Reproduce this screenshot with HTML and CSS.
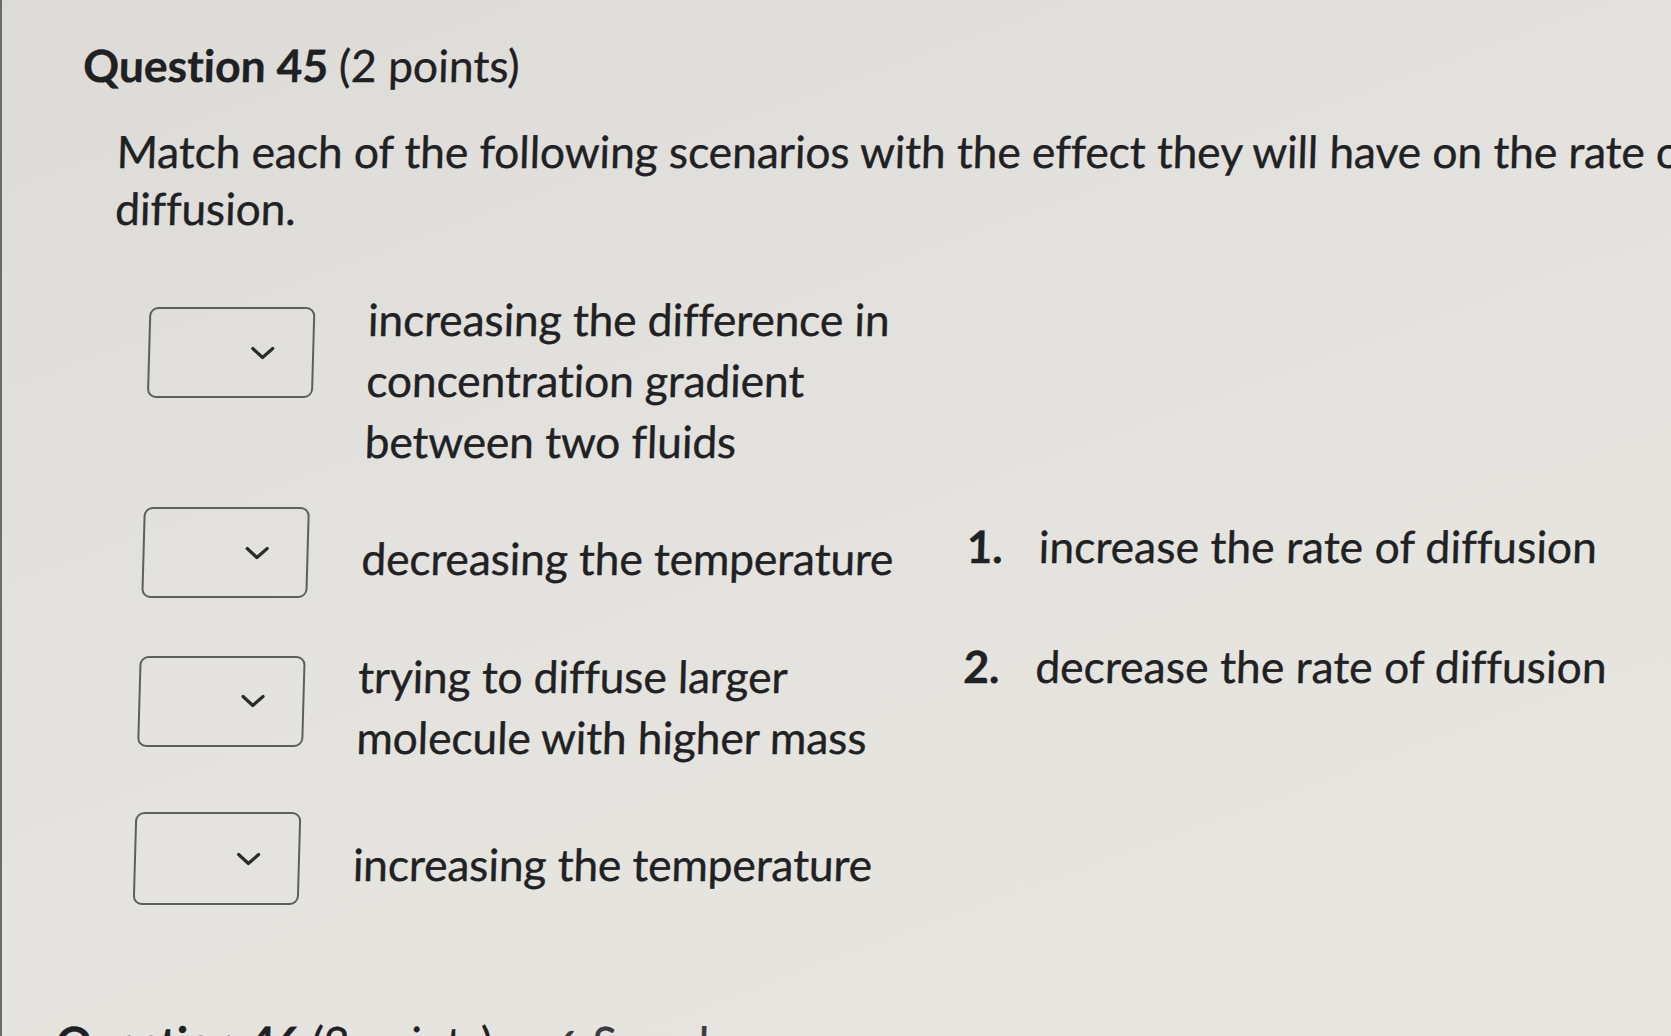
FILE: index.html
```html
<!DOCTYPE html>
<html>
  <head>
    <meta charset="UTF-8" />
    <title>Question 45</title>
    <link rel="stylesheet" href="styles.css">
  </head>
  <body>
    <div class="page">
      <section class="question">
        <h2 class="qtitle">Question 45 <span class="points">(2 points)</span></h2>

        <p class="prompt">Match each of the following scenarios with the effect they will have on the rate of diffusion.</p>

        <div class="match">
          <div class="pairs">
            <div class="pair top">
              <div class="select"><span class="chev"><svg width="25" height="14" viewBox="0 0 25 14"><path d="M2.5 2.5 L12.5 11.5 L22.5 2.5" fill="none" stroke="#2b2b2b" stroke-width="3.2" stroke-linecap="round" stroke-linejoin="round"/></svg></span></div>
              <div class="label">increasing the difference in concentration gradient between two fluids</div>
            </div>
            <div class="pair">
              <div class="select"><span class="chev"><svg width="25" height="14" viewBox="0 0 25 14"><path d="M2.5 2.5 L12.5 11.5 L22.5 2.5" fill="none" stroke="#2b2b2b" stroke-width="3.2" stroke-linecap="round" stroke-linejoin="round"/></svg></span></div>
              <div class="label">decreasing the temperature</div>
            </div>
            <div class="pair">
              <div class="select"><span class="chev"><svg width="25" height="14" viewBox="0 0 25 14"><path d="M2.5 2.5 L12.5 11.5 L22.5 2.5" fill="none" stroke="#2b2b2b" stroke-width="3.2" stroke-linecap="round" stroke-linejoin="round"/></svg></span></div>
              <div class="label">trying to diffuse larger molecule with higher mass</div>
            </div>
            <div class="pair last">
              <div class="select"><span class="chev"><svg width="25" height="14" viewBox="0 0 25 14"><path d="M2.5 2.5 L12.5 11.5 L22.5 2.5" fill="none" stroke="#2b2b2b" stroke-width="3.2" stroke-linecap="round" stroke-linejoin="round"/></svg></span></div>
              <div class="label">increasing the temperature</div>
            </div>
          </div>

          <ol class="choices">
            <li><span class="num">1.</span>increase the rate of diffusion</li>
            <li><span class="num">2.</span>decrease the rate of diffusion</li>
          </ol>
        </div>
      </section>

      <section class="question next">
        <h2 class="qtitle">Question 46 <span class="points">(2 points)</span> <span class="saved">&#10003; Saved</span></h2>
      </section>
    </div>
  </body>
</html>
```

FILE: styles.css
```css
html, body {
  margin: 0;
  padding: 0;
  height: 100%;
  overflow: hidden;
}

body {
  background: linear-gradient(160deg, #dcdbd8 0%, #e3e2de 45%, #e8e6df 100%);
  border-left: 2px solid #6a6a68;
  font-family: Lato, "Open Sans", sans-serif;
  font-variant-ligatures: none;
  color: #1f2123;
  -webkit-text-stroke: 0.35px #1f2123;
}

.page {
  width: 1760px;
  padding: 41px 0 0 83px;
  transform: skewX(-1.6deg);
  transform-origin: 0 0;
}

.qtitle {
  margin: 0;
  font-size: 44.5px;
  line-height: 48px;
  font-weight: 700;
  color: #1e2022;
}

.points {
  font-weight: 400;
}

.prompt {
  margin: 33px 0 0 36px;
  width: 1650px;
  font-size: 44.5px;
  line-height: 57px;
  letter-spacing: -0.15px;
}

.match {
  display: flex;
  margin-top: 52px;
}

.pairs {
  width: 897px;
  padding-left: 73px;
  box-sizing: border-box;
  display: flex;
  flex-direction: column;
  gap: 42px;
}

.pair {
  display: flex;
  align-items: center;
}

.pair.top {
  align-items: flex-start;
  margin-bottom: -6px;
}

.pair.top .select {
  margin-top: 19px;
}

.pair.last {
  margin-top: 8px;
}

.pair.last .select {
  height: 93px;
}

.select {
  flex: none;
  width: 166px;
  height: 91px;
  box-sizing: border-box;
  border: 2px solid #5c5e60;
  border-radius: 9px;
  display: flex;
  align-items: center;
  padding-left: 100px;
  -webkit-text-stroke: 0;
}

.chev svg {
  display: block;
}

.label {
  margin-left: 53px;
  font-size: 44.5px;
  line-height: 61px;
  width: 560px;
  letter-spacing: -0.2px;
}

/* single rows sit a touch below the middle of their box */
.pair:not(.top) .label {
  padding-top: 5px;
  margin-bottom: -5px;
}

.choices {
  list-style: none;
  margin: 0;
  padding: 227px 0 0 0;
  font-size: 44.5px;
  line-height: 61px;
}

.choices li {
  display: flex;
  margin-bottom: 59px;
}

.num {
  width: 72px;
  font-weight: 700;
}

.next {
  margin-top: 113px;
}

.saved {
  font-weight: 400;
  margin-left: 40px;
  color: #3a3c3e;
}
```
